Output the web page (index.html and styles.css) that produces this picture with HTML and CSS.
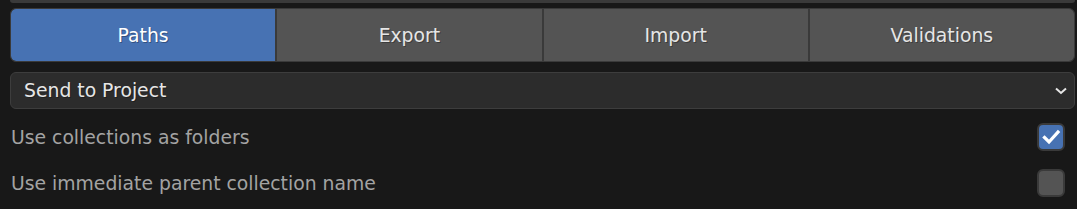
FILE: index.html
```html
<!DOCTYPE html>
<html>
<head>
<meta charset="utf-8">
<link rel="stylesheet" href="styles.css">
</head>
<body>
<div class="panel">
  <div class="top-strip"></div>
  <div class="tabs">
    <div class="tab active">Paths</div>
    <div class="tab">Export</div>
    <div class="tab">Import</div>
    <div class="tab">Validations</div>
  </div>
  <div class="dropdown">
    <span class="dd-text">Send to Project</span>
    <svg class="chev" width="12" height="8" viewBox="0 0 12 8"><polyline points="1,1.5 6,6 11,1.5" fill="none" stroke="#e6e6e6" stroke-width="2"/></svg>
  </div>
  <div class="row first">
    <span class="label">Use collections as folders</span>
    <span class="check on"><svg width="27" height="27" viewBox="0 0 27 27"><polyline points="6.5,13.5 11,18 20,8" fill="none" stroke="#ffffff" stroke-width="3.2" stroke-linecap="square"/></svg></span>
  </div>
  <div class="row">
    <span class="label">Use immediate parent collection name</span>
    <span class="check"></span>
  </div>
</div>
</body>
</html>
```

FILE: styles.css
```css
html, body {
  margin: 0;
  padding: 0;
  background: #181818;
  width: 1077px;
  height: 209px;
  overflow: hidden;
  font-family: "DejaVu Sans", sans-serif;
}
.panel {
  display: flex;
  flex-direction: column;
}
.top-strip {
  height: 3px;
  margin: 0 2px 0 10px;
  background: #3a3a3a;
  border-radius: 0 0 5px 5px;
}
.tabs {
  margin: 5px 2px 0 10px;
  height: 54px;
  display: flex;
  border-radius: 6px;
  overflow: hidden;
  background: #3a3a3a;
  box-sizing: border-box;
  border: 1px solid #3a3a3a;
  gap: 2px;
}
.tab {
  flex: 1;
  display: flex;
  align-items: center;
  justify-content: center;
  background: #545454;
  color: #e6e6e6;
  font-size: 18.8px;
  text-shadow: 1px 1px 0 rgba(0,0,0,0.3);
}
.tab.active {
  background: #4772b3;
  color: #ffffff;
  border-radius: 5px 0 0 5px;
}
.tab:last-child {
  border-radius: 0 5px 5px 0;
}
.dropdown {
  margin: 10px 2px 0 10px;
  height: 37px;
  box-sizing: border-box;
  background: #2c2c2c;
  border: 1px solid #3d3d3d;
  border-radius: 6px;
  display: flex;
  align-items: center;
  justify-content: space-between;
  padding: 0 7px 0 13px;
  color: #e6e6e6;
  font-size: 18.8px;
  text-shadow: 1px 1px 0 rgba(0,0,0,0.3);
}
.row {
  height: 46px;
  display: flex;
  align-items: center;
  justify-content: space-between;
  padding: 0 12px 0 11px;
}
.row.first {
  margin-top: 5px;
}
.label {
  color: #a3a3a3;
  font-size: 18.8px;
}
.check {
  width: 28px;
  height: 28px;
  box-sizing: border-box;
  border-radius: 6px;
  background: #545454;
  border: 2px solid #3a3a3a;
  display: flex;
  align-items: center;
  justify-content: center;
}
.check.on {
  background: #4772b3;
}
.check svg {
  display: block;
  flex: none;
}
```
